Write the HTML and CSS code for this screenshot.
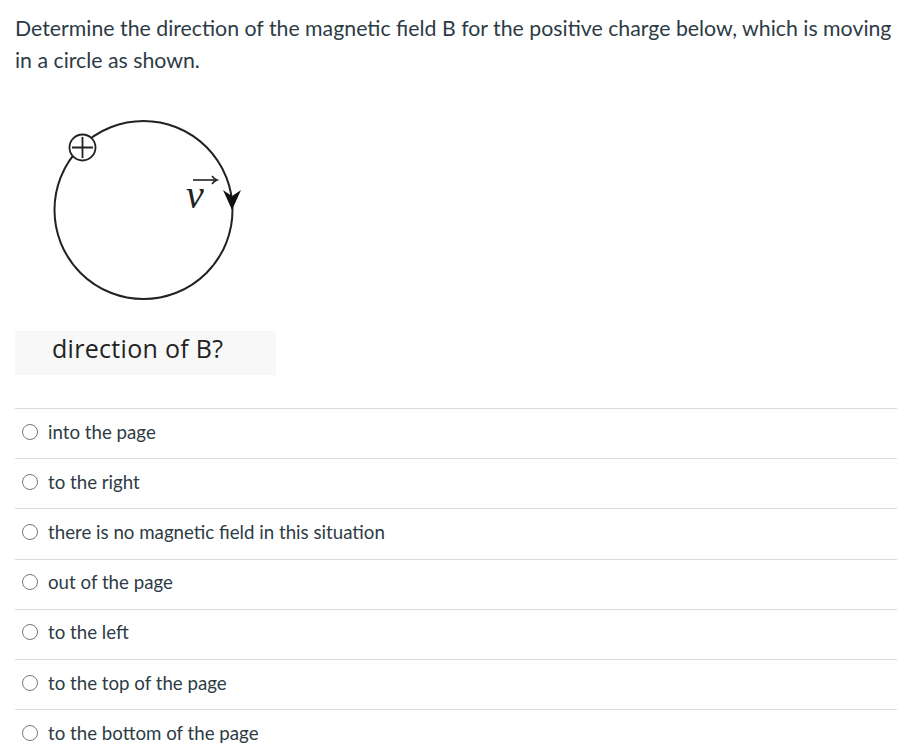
FILE: index.html
```html
<!DOCTYPE html>
<html>
<head>
<meta charset="utf-8">
<link rel="stylesheet" href="styles.css">
</head>
<body>
<div class="question">
  <p class="prompt">Determine the direction of the magnetic field B for the positive charge below, which is moving in a circle as shown.</p>
  <div class="figure">
    <svg class="diagram" width="261" height="231" viewBox="0 0 261 231">
      <circle cx="128.5" cy="110" r="89" fill="none" stroke="#222" stroke-width="2"/>
      <circle cx="67.5" cy="47.5" r="13" fill="#fff" stroke="#222" stroke-width="1.8"/>
      <path d="M 67.5 37 V 58 M 57 47.5 H 78" stroke="#222" stroke-width="1.8"/>
      <path d="M 208 90 Q 214 94 217 96 Q 220 94 226 90 L 217 110 Z" fill="#111"/>
      <text x="171" y="108" class="v">v</text>
      <path d="M 178 80 H 201" stroke="#222" stroke-width="1.6"/>
      <path d="M 197 76 Q 199 79 202 80 Q 199 81 197 84" fill="none" stroke="#222" stroke-width="1.5"/>
    </svg>
    <div class="label">direction of B?</div>
  </div>
  <ul class="answers">
    <li><span class="radio"></span>into the page</li>
    <li><span class="radio"></span>to the right</li>
    <li><span class="radio"></span>there is no magnetic field in this situation</li>
    <li><span class="radio"></span>out of the page</li>
    <li><span class="radio"></span>to the left</li>
    <li><span class="radio"></span>to the top of the page</li>
    <li><span class="radio"></span>to the bottom of the page</li>
  </ul>
</div>
</body>
</html>
```
FILE: styles.css
```css
html, body {
  margin: 0;
  padding: 0;
  background: #fff;
}
body {
  font-family: Lato, "Open Sans", sans-serif;
  color: #2d3b45;
}
.question {
  width: 882px;
  padding: 0 0 0 15px;
}
.prompt {
  margin: 0;
  padding-top: 12px;
  font-size: 21.3px;
  line-height: 32px;
}
.figure {
  margin-top: 24px;
  width: 261px;
}
.diagram {
  display: block;
}
.v {
  font-family: "Liberation Serif", "DejaVu Serif", serif;
  font-style: italic;
  font-size: 40px;
  fill: #222;
}
.label {
  height: 44px;
  box-sizing: border-box;
  background: #f8f8f8;
  color: #222;
  font-family: "Open Sans", sans-serif;
  font-size: 25px;
  line-height: 34px;
  padding-left: 37px;
  letter-spacing: 0.3px;
}
.answers {
  list-style: none;
  margin: 33px 0 0 0;
  padding: 0;
}
.answers li {
  display: flex;
  align-items: center;
  height: 45.2px;
  padding-bottom: 4px;
  border-top: 1px solid #dcdcdc;
  font-size: 18.7px;
  color: #2d3b45;
}
.radio {
  width: 16px;
  height: 16px;
  border: 1.3px solid #777;
  border-radius: 50%;
  margin: 0 10px 0 7px;
  box-sizing: border-box;
  flex: none;
}
```
